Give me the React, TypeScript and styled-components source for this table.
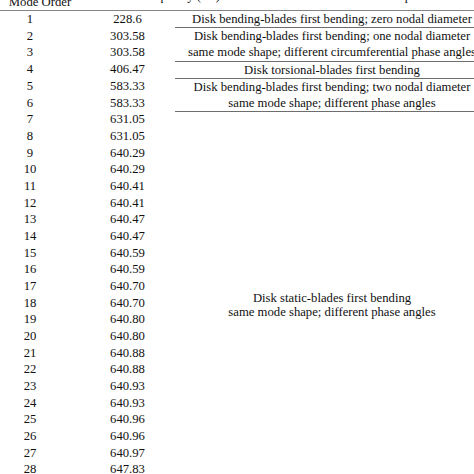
import styled, { createGlobalStyle } from "styled-components";

const GlobalStyle = createGlobalStyle`
  html, body {
    margin: 0;
    padding: 0;
    background: #ffffff;
    overflow: hidden;
  }
`;

const Page = styled.div`
  width: 474px;
  height: 474px;
  overflow: hidden;
  background: #ffffff;
`;

const Table = styled.table`
  width: 489px;
  margin-top: -11px;
  border-collapse: collapse;
  table-layout: fixed;
  font-family: "Liberation Serif", "Times New Roman", serif;
  font-size: 12.7px;
  color: #111111;
`;

const HeadRow = styled.tr`
  height: 21.6px;
  border-bottom: 1.4px solid #858585;
`;

const HeadCell = styled.th<{ $shift?: number; $drop?: number; $align?: string }>`
  padding: ${(p) => p.$drop ?? 0}px 0 0 ${(p) => p.$shift ?? 0}px;
  font-weight: normal;
  text-align: ${(p) => p.$align ?? "center"};
  white-space: nowrap;
  overflow: visible;
  line-height: 14px;
  vertical-align: top;
`;

const Row = styled.tr`
  height: 16.65px;
`;

const NumCell = styled.td`
  padding: 0 20px 0 0;
  text-align: center;
  line-height: 16.65px;
`;

const FreqCell = styled.td`
  padding: 0;
  text-align: center;
  line-height: 16.65px;
`;

const DescCell = styled.td<{ $ruled?: boolean; $lead?: number; $top?: number }>`
  padding: ${(p) => p.$top ?? 0}px 0 0 0;
  text-align: center;
  vertical-align: middle;
  white-space: nowrap;
  line-height: ${(p) => p.$lead ?? 16}px;
  border-bottom: ${(p) => (p.$ruled ? "1px solid #6e6e6e" : "none")};
`;

const modes: [number, string][] = [
  [1, "228.6"],
  [2, "303.58"],
  [3, "303.58"],
  [4, "406.47"],
  [5, "583.33"],
  [6, "583.33"],
  [7, "631.05"],
  [8, "631.05"],
  [9, "640.29"],
  [10, "640.29"],
  [11, "640.41"],
  [12, "640.41"],
  [13, "640.47"],
  [14, "640.47"],
  [15, "640.59"],
  [16, "640.59"],
  [17, "640.70"],
  [18, "640.70"],
  [19, "640.80"],
  [20, "640.80"],
  [21, "640.88"],
  [22, "640.88"],
  [23, "640.93"],
  [24, "640.93"],
  [25, "640.96"],
  [26, "640.96"],
  [27, "640.97"],
  [28, "647.83"],
];

type Group = {
  start: number;
  span: number;
  lines: string[];
  ruled: boolean;
  lead?: number;
  top?: number;
};

const groups: Group[] = [
  { start: 1, span: 1, lines: ["Disk bending-blades first bending; zero nodal diameter"], ruled: true },
  {
    start: 2,
    span: 2,
    lines: [
      "Disk bending-blades first bending; one nodal diameter",
      "same mode shape; different circumferential phase angles",
    ],
    ruled: true,
  },
  { start: 4, span: 1, lines: ["Disk torsional-blades first bending"], ruled: true },
  {
    start: 5,
    span: 2,
    lines: ["Disk bending-blades first bending; two nodal diameter", "same mode shape; different phase angles"],
    ruled: true,
  },
  {
    start: 7,
    span: 22,
    lines: ["Disk static-blades first bending", "same mode shape; different phase angles"],
    ruled: false,
    lead: 14,
    top: 20,
  },
];

function App() {
  return (
    <Page>
      <GlobalStyle />
      <Table>
        <colgroup>
          <col style={{ width: 80 }} />
          <col style={{ width: 95 }} />
          <col style={{ width: 314 }} />
        </colgroup>
        <thead>
          <HeadRow>
            <HeadCell $drop={6}>Mode Order</HeadCell>
            <HeadCell $align="left" $shift={60}>Frequency (Hz)</HeadCell>
            <HeadCell $align="left" $shift={178}>Mode Shape</HeadCell>
          </HeadRow>
        </thead>
        <tbody>
          {modes.map(([order, freq]) => {
            const group = groups.find((g) => g.start === order);
            return (
              <Row key={order}>
                <NumCell>{order}</NumCell>
                <FreqCell>{freq}</FreqCell>
                {group && (
                  <DescCell rowSpan={group.span} $ruled={group.ruled} $lead={group.lead} $top={group.top}>
                    {group.lines.map((line, i) => (
                      <div key={i}>{line}</div>
                    ))}
                  </DescCell>
                )}
              </Row>
            );
          })}
        </tbody>
      </Table>
    </Page>
  );
}

export default App;
